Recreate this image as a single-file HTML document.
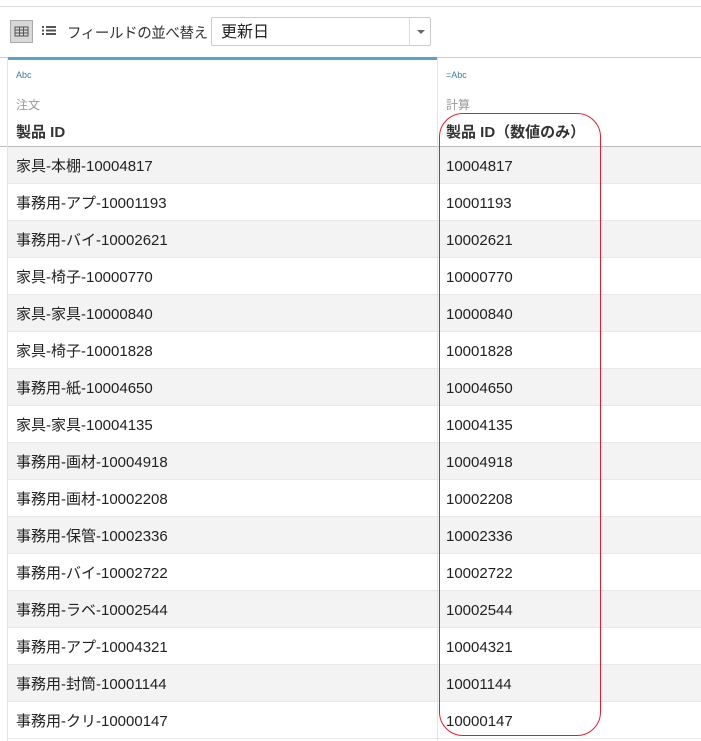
<!DOCTYPE html>
<html><head><meta charset="utf-8"><style>
body{margin:0;width:701px;height:741px;background:#fff;overflow:hidden;font-family:"Liberation Sans","Noto Sans CJK JP",sans-serif;position:relative;color:#222}
.top{position:absolute;left:0;top:6px;width:701px;height:1px;background:#ddd}
.tb{position:absolute;top:17px;left:0}
.gridbtn{position:absolute;left:10px;top:3px;width:23px;height:23px;background:#d8d8d8;border:1px solid #aaa;box-sizing:border-box}
.lbl{position:absolute;left:67px;top:3px;line-height:29px;font-size:14.5px;color:#333;white-space:nowrap;letter-spacing:-0.4px}
.sel{position:absolute;left:211px;top:0;width:220px;height:29px;border:1px solid #ccc;box-sizing:border-box;border-radius:2px;font-size:16px;line-height:29px;padding:0 0 0 9px}
.sel .dv{position:absolute;left:197px;top:0;width:1px;height:27px;background:#ddd}
.sel .ar{position:absolute;left:205px;top:12px;border:4px solid transparent;border-top:4px solid #666}
.hline{position:absolute;left:0;top:57px;width:701px;height:1px;background:#ccc}
.blue{position:absolute;left:8px;top:57px;width:429px;height:3px;background:#5ba3c9}
.colsep{position:absolute;left:437px;top:58px;width:1px;height:683px;background:#e4e4e4}
.lsep{position:absolute;left:7px;top:58px;width:1px;height:683px;background:#e4e4e4}
.abc{position:absolute;top:70px;font-size:9px;color:#3a7ca5}
.cat{position:absolute;top:96px;font-size:12px;color:#999}
.hd{position:absolute;top:121px;font-size:15px;font-weight:bold;color:#333}
.hb{position:absolute;left:0;top:146px;width:701px;height:1px;background:#bbb}
.row{position:absolute;left:8px;width:693px;height:37px;border-bottom:1px solid #e8e8e8;box-sizing:border-box;font-size:15px}
.row.g{background:#f3f3f3}
.row span{position:absolute;top:2px;line-height:36px;height:34px}
.red{position:absolute;left:439px;top:113px;width:162px;height:623px;border:1px solid #e02030;border-radius:24px;box-sizing:border-box}
</style></head><body>
<div class="top"></div>
<div class="tb">
<div class="gridbtn"><svg width="21" height="21" viewBox="0 0 21 21"><rect x="4" y="6" width="13" height="9" fill="none" stroke="#555" stroke-width="1"/><path d="M4 9h13M4 12h13M8.5 6v9M12.5 6v9" stroke="#555" stroke-width="1"/></svg></div>
<svg style="position:absolute;left:42px;top:9px" width="14" height="12"><path d="M0 1h2M4 1h10M0 4.5h2M4 4.5h10M0 8h2M4 8h10" stroke="#555" stroke-width="2"/></svg>
<div class="lbl">フィールドの並べ替え</div>
<div class="sel">更新日<div class="dv"></div><div class="ar"></div></div>
</div>
<div class="hline"></div><div class="blue"></div>
<div class="abc" style="left:16px">Abc</div><div class="abc" style="left:446px">=Abc</div>
<div class="cat" style="left:16px">注文</div><div class="cat" style="left:446px">計算</div>
<div class="hd" style="left:16px">製品 ID</div><div class="hd" style="left:446px">製品 ID（数値のみ）</div>
<div class="hb"></div>
<div class="row g" style="top:147px"><span style="left:8px">家具-本棚-10004817</span><span style="left:438px">10004817</span></div>
<div class="row" style="top:184px"><span style="left:8px">事務用-アプ-10001193</span><span style="left:438px">10001193</span></div>
<div class="row g" style="top:221px"><span style="left:8px">事務用-バイ-10002621</span><span style="left:438px">10002621</span></div>
<div class="row" style="top:258px"><span style="left:8px">家具-椅子-10000770</span><span style="left:438px">10000770</span></div>
<div class="row g" style="top:295px"><span style="left:8px">家具-家具-10000840</span><span style="left:438px">10000840</span></div>
<div class="row" style="top:332px"><span style="left:8px">家具-椅子-10001828</span><span style="left:438px">10001828</span></div>
<div class="row g" style="top:369px"><span style="left:8px">事務用-紙-10004650</span><span style="left:438px">10004650</span></div>
<div class="row" style="top:406px"><span style="left:8px">家具-家具-10004135</span><span style="left:438px">10004135</span></div>
<div class="row g" style="top:443px"><span style="left:8px">事務用-画材-10004918</span><span style="left:438px">10004918</span></div>
<div class="row" style="top:480px"><span style="left:8px">事務用-画材-10002208</span><span style="left:438px">10002208</span></div>
<div class="row g" style="top:517px"><span style="left:8px">事務用-保管-10002336</span><span style="left:438px">10002336</span></div>
<div class="row" style="top:554px"><span style="left:8px">事務用-バイ-10002722</span><span style="left:438px">10002722</span></div>
<div class="row g" style="top:591px"><span style="left:8px">事務用-ラベ-10002544</span><span style="left:438px">10002544</span></div>
<div class="row" style="top:628px"><span style="left:8px">事務用-アプ-10004321</span><span style="left:438px">10004321</span></div>
<div class="row g" style="top:665px"><span style="left:8px">事務用-封筒-10001144</span><span style="left:438px">10001144</span></div>
<div class="row" style="top:702px"><span style="left:8px">事務用-クリ-10000147</span><span style="left:438px">10000147</span></div>
<div class="lsep"></div><div class="colsep"></div>
<div class="red"></div>
</body></html>
